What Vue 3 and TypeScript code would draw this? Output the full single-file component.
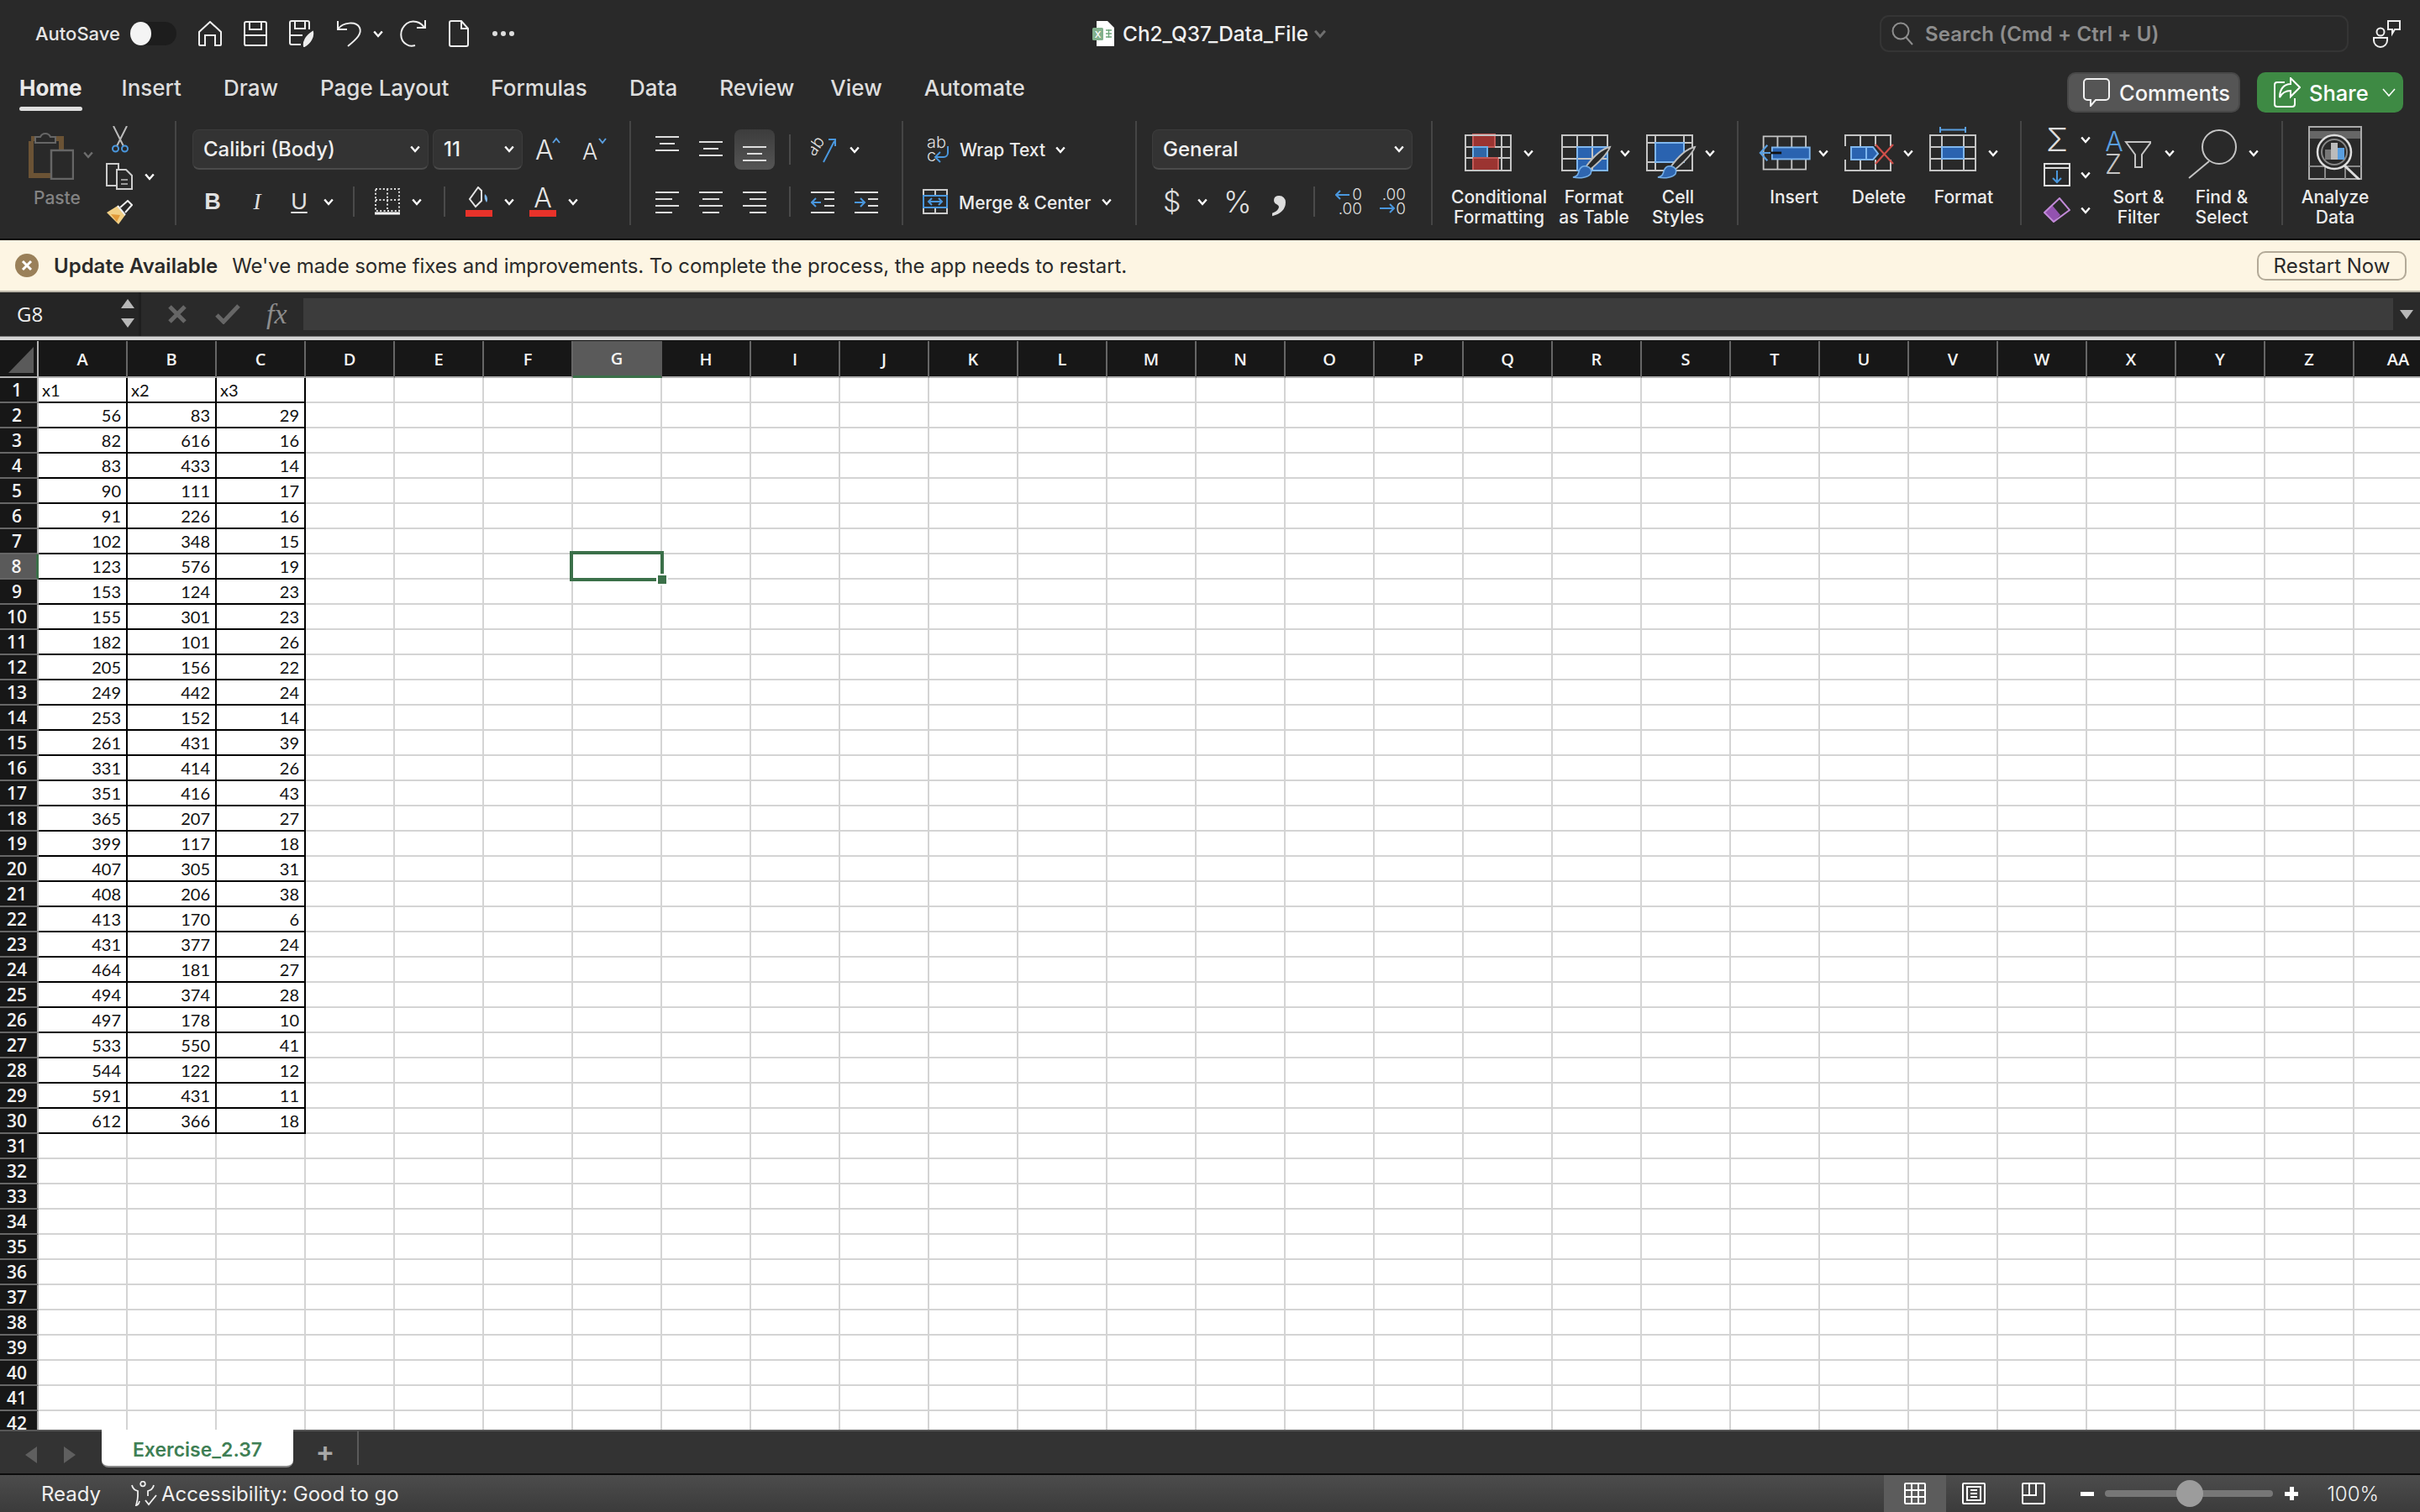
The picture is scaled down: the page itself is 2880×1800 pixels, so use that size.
<script setup lang="ts">
const columns = [..."ABCDEFGHIJKLMNOPQRSTUVWXYZ", "AA"];

const data: (string | number)[][] = [
  ["x1", "x2", "x3"],
  [56, 83, 29], [82, 616, 16], [83, 433, 14], [90, 111, 17], [91, 226, 16],
  [102, 348, 15], [123, 576, 19], [153, 124, 23], [155, 301, 23], [182, 101, 26],
  [205, 156, 22], [249, 442, 24], [253, 152, 14], [261, 431, 39], [331, 414, 26],
  [351, 416, 43], [365, 207, 27], [399, 117, 18], [407, 305, 31], [408, 206, 38],
  [413, 170, 6], [431, 377, 24], [464, 181, 27], [494, 374, 28], [497, 178, 10],
  [533, 550, 41], [544, 122, 12], [591, 431, 11], [612, 366, 18],
];

const rowNumbers = Array.from({ length: 42 }, (_, i) => i + 1);
const selectedCol = 6;
const selectedRow = 8;

function cellValue(row: number, col: number) {
  return data[row - 1]?.[col] ?? "";
}
function isBoxed(row: number, col: number) {
  return col < 3 && row <= data.length;
}
</script>

<template>
  <div class="app">
    <svg class="defs" width="0" height="0">
      <defs>
        <symbol id="chev" viewBox="0 0 12 9">
          <path d="M1.2 1.5 6 7l4.8-5.5" fill="none" stroke="currentColor" stroke-width="2.4" />
        </symbol>
        <symbol id="brush" viewBox="0 0 62 64" overflow="visible">
          <path d="M58 25c-3 8-14 19-25 28l-4-4c8-11 19-22 29-24Z" fill="#292929" stroke="#bdbdbd" stroke-width="2" />
          <path d="M30 48c5 1 7 5 5 9-3 4-12 6-21 4 5-1 6-3 7-7 1-5 5-7 9-6Z" fill="#2f66b0" stroke="#74aee6" stroke-width="1.6" />
        </symbol>
      </defs>
    </svg>

    <header class="titlebar">
      <div class="title-left">
        <span class="autosave">AutoSave</span>
        <span class="toggle"><span class="knob"></span></span>
        <svg class="qa" width="28" height="30" viewBox="0 0 28 30" fill="none" stroke="#eee" stroke-width="2">
          <path d="M1 13 14 1l13 12v15a1 1 0 0 1-1 1h-6V17h-12v12H2a1 1 0 0 1-1-1V13Z" />
        </svg>
        <svg class="qa" width="28" height="30" viewBox="0 0 28 30" fill="none" stroke="#eee" stroke-width="2">
          <path d="M1 3a2 2 0 0 1 2-2h22a2 2 0 0 1 2 2v24a2 2 0 0 1-2 2H3a2 2 0 0 1-2-2V3ZM7 1v9h14V1M1 17h26v12H1" />
        </svg>
        <svg class="qa" width="30" height="32" viewBox="0 0 30 32" fill="none" stroke="#eee" stroke-width="2">
          <path d="M14 29H3a2 2 0 0 1-2-2V3a2 2 0 0 1 2-2h19a2 2 0 0 1 2 2v8M7 1v9h12V1M1 18h15" />
          <path d="M18 31c-1-5 2-12 10-17 1 5-2 13-10 17Z" fill="#eee" />
        </svg>
        <svg width="35" height="32" viewBox="0 0 35 32" fill="none" stroke="#eee" stroke-width="2">
          <path d="M2 1v10h11M2 11C8 2 24 1 28 9c3 7-3 13-14 22" />
        </svg>
        <svg class="chev chev-undo"><use href="#chev" /></svg>
        <svg width="32" height="32" viewBox="0 0 32 32" fill="none" stroke="#eee" stroke-width="2">
          <path d="M29 9C25 2 15-1 8 4-1 11-1 24 8 29c3 2 7 2 10 1M30 0v9H20" />
        </svg>
        <svg class="qa-new" width="24" height="32" viewBox="0 0 24 32" fill="none" stroke="#eee" stroke-width="2">
          <path d="M1 3a2 2 0 0 1 2-2h12l8 9v19a2 2 0 0 1-2 2H3a2 2 0 0 1-2-2V3ZM15 1v9h8" />
        </svg>
        <span class="dots"><i></i><i></i><i></i></span>
      </div>
      <div class="doc-title">
        <svg width="26" height="30" viewBox="0 0 26 30">
          <path d="M5 0h13l8 8v22H5Z" fill="#fff" />
          <rect x="0" y="8" width="13" height="15" rx="1.5" fill="#82b08c" />
          <text x="6.5" y="20" text-anchor="middle" class="file-x">X</text>
          <path d="M16 11h7M16 15h7M16 19h7M19.5 10v10" stroke="#6fa57b" stroke-width="1.4" />
        </svg>
        <span>Ch2_Q37_Data_File</span>
        <svg class="chev chev-dim chev-title" viewBox="0 0 12 9"><use href="#chev" /></svg>
      </div>
      <div class="search">
        <svg width="26" height="28" viewBox="0 0 26 28" fill="none" stroke="#8e8e8e" stroke-width="2">
          <circle cx="11" cy="11" r="9.5" /><path d="m17 18 8 9" />
        </svg>
        <span>Search (Cmd + Ctrl + U)</span>
      </div>
      <svg class="person" width="34" height="34" viewBox="0 0 34 34" fill="none" stroke="#eee" stroke-width="2">
        <circle cx="9" cy="15" r="4.5" />
        <path d="M1 22h16v3a8 8 0 0 1-16 0v-3ZM18 2h14v10h-6l-3 5v-5h-5V2Z" />
      </svg>
    </header>

    <nav class="tabs">
      <div class="tab-list">
        <span class="tab active">Home</span>
        <span class="tab">Insert</span>
        <span class="tab">Draw</span>
        <span class="tab">Page Layout</span>
        <span class="tab">Formulas</span>
        <span class="tab">Data</span>
        <span class="tab">Review</span>
        <span class="tab tab-view">View</span>
        <span class="tab">Automate</span>
      </div>
      <div class="tab-actions">
        <button class="btn comments">
          <svg width="32" height="34" viewBox="0 0 32 34" fill="none" stroke="#f2f2f2" stroke-width="2">
            <path d="M5 1h22a4 4 0 0 1 4 4v17a4 4 0 0 1-4 4H15l-6 7v-7H5a4 4 0 0 1-4-4V5a4 4 0 0 1 4-4Z" />
          </svg>
          Comments
        </button>
        <button class="btn share">
          <svg width="32" height="36" viewBox="0 0 32 36" fill="none" stroke="#fff" stroke-width="2">
            <path d="M13 6H4a3 3 0 0 0-3 3v23a3 3 0 0 0 3 3h18a3 3 0 0 0 3-3v-7" />
            <path d="M20 1v7c-8 0-13 6-13 16 3-6 7-8 13-8v7l11-11L20 1Z" />
          </svg>
          Share
          <svg class="chev chev-share" viewBox="0 0 16 10"><path d="m1 1 7 8 7-8" fill="none" stroke="#fff" stroke-width="1.6" /></svg>
        </button>
      </div>
    </nav>

    <section class="ribbon">
      <!-- clipboard -->
      <div class="group g-clip">
        <div class="paste">
          <div class="paste-top">
            <svg width="54" height="60" viewBox="0 0 54 60" fill="none">
              <path d="M3 14v41h26M31 11h8v14M3 11h6" stroke="#6b5335" stroke-width="6" />
              <path d="M8 16V9h6a6.5 6.5 0 0 1 12 0h6v7Z" fill="#292929" stroke="#666" stroke-width="2" />
              <rect x="27" y="25" width="26" height="34" fill="#292929" stroke="#666" stroke-width="2.5" />
            </svg>
            <svg class="chev chev-dim"><use href="#chev" /></svg>
          </div>
          <span class="paste-label">Paste</span>
        </div>
        <div class="clip-tools">
          <svg class="scissors" width="22" height="32" viewBox="0 0 22 32" fill="none">
            <path d="M3 0l12 24M19 0 7 24" stroke="#bbb" stroke-width="2" />
            <circle cx="5.5" cy="27" r="3.5" stroke="#4a97dd" stroke-width="2" />
            <circle cx="16.5" cy="27" r="3.5" stroke="#4a97dd" stroke-width="2" />
          </svg>
          <div class="tool">
            <svg width="32" height="32" viewBox="0 0 32 32" fill="none" stroke="#ccc" stroke-width="2">
              <path d="M12 27H1V1h14v7M13 8h11l7 7v16H13V8Z" />
              <path d="M18 20h8M18 25h8" stroke="#999" />
            </svg>
            <svg class="chev"><use href="#chev" /></svg>
          </div>
          <svg class="format-painter" width="32" height="30" viewBox="0 0 32 30">
            <path d="M1 15 14 7l9 11-8 11Z" fill="#f2cf85" />
            <path d="M6 17 17 18l-4 8Z" fill="#e29a3a" />
            <path d="M14 7 23 18" stroke="#eee" stroke-width="2" />
            <path d="m17 9 9-8 5 5-8 9" fill="none" stroke="#eee" stroke-width="2" />
          </svg>
        </div>
      </div>

      <!-- font -->
      <div class="group g-font">
        <div class="rib-row font-r1">
          <div class="select select-font"><span>Calibri (Body)</span><svg class="chev"><use href="#chev" /></svg></div>
          <div class="select select-size"><span>11</span><svg class="chev"><use href="#chev" /></svg></div>
          <svg class="grow" width="32" height="30" viewBox="0 0 32 30">
            <text x="0" y="27" class="a-glyph">A</text>
            <path d="m21 7 4-5 4 5" fill="none" stroke="#5a9fe0" stroke-width="2" />
          </svg>
          <svg class="shrink" width="32" height="30" viewBox="0 0 32 30">
            <text x="0" y="27" class="a-glyph small">A</text>
            <path d="m20 2 4 5 4-5" fill="none" stroke="#5a9fe0" stroke-width="2" />
          </svg>
        </div>
        <div class="rib-row font-r2">
          <span class="glyph bold">B</span>
          <span class="glyph italic">I</span>
          <span class="tool tool-u">
            <span class="glyph under">U</span>
            <svg class="chev"><use href="#chev" /></svg>
          </span>
          <i class="vsep"></i>
          <span class="tool tool-border">
            <svg width="30" height="32" viewBox="0 0 30 32" fill="none" stroke="#ddd" stroke-width="2" stroke-dasharray="2 2.4">
              <path d="M1 1h28v26H1ZM15 1v26M1 14h28" />
              <path d="M0 30h30" stroke-dasharray="none" stroke="#fff" stroke-width="3" />
            </svg>
            <svg class="chev"><use href="#chev" /></svg>
          </span>
          <i class="vsep"></i>
          <span class="tool tool-fill">
            <svg width="32" height="36" viewBox="0 0 32 36">
              <path d="M15 1 5 15l7 9 7-7V5Z" fill="none" stroke="#e5e5e5" stroke-width="2" />
              <path d="M23 9c3 2 4 7 2 10-2-3-3-6-2-10Z" fill="#7fb6e8" />
              <rect y="28" width="32" height="8" fill="#e8322a" />
            </svg>
            <svg class="chev"><use href="#chev" /></svg>
          </span>
          <span class="tool">
            <svg width="32" height="36" viewBox="0 0 32 36">
              <text x="16" y="25" text-anchor="middle" class="a-glyph">A</text>
              <rect y="28" width="32" height="8" fill="#e8322a" />
            </svg>
            <svg class="chev"><use href="#chev" /></svg>
          </span>
        </div>
      </div>

      <!-- alignment -->
      <div class="group g-align">
        <div class="rib-row align-r1">
          <svg width="28" height="32" viewBox="0 0 28 32" stroke="#ddd" stroke-width="2"><path d="M0 1h28M5 9h18M0 17h28" /></svg>
          <svg width="28" height="32" viewBox="0 0 28 32" stroke="#ddd" stroke-width="2"><path d="M0 7h28M5 15h18M0 23h28" /></svg>
          <span class="align-active">
            <svg width="28" height="32" viewBox="0 0 28 32" stroke="#ddd" stroke-width="2"><path d="M0 13h28M5 21h18M0 29h28" /></svg>
          </span>
          <i class="vsep"></i>
          <span class="tool">
            <svg width="32" height="32" viewBox="0 0 32 32" fill="none">
              <text x="0" y="0" transform="translate(4 25) rotate(-55)" class="thin-text">ab</text>
              <path d="M15 31 28 6M21 4h8v8" stroke="#4a97dd" stroke-width="2" />
            </svg>
            <svg class="chev"><use href="#chev" /></svg>
          </span>
        </div>
        <div class="rib-row align-r2">
          <svg width="28" height="32" viewBox="0 0 28 32" stroke="#ddd" stroke-width="2"><path d="M0 5h28M0 13h20M0 21h28M0 29h20" /></svg>
          <svg width="28" height="32" viewBox="0 0 28 32" stroke="#ddd" stroke-width="2"><path d="M0 5h28M4 13h20M0 21h28M4 29h20" /></svg>
          <svg width="28" height="32" viewBox="0 0 28 32" stroke="#ddd" stroke-width="2"><path d="M0 5h28M8 13h20M0 21h28M8 29h20" /></svg>
          <i class="vsep"></i>
          <svg width="28" height="32" viewBox="0 0 28 32" fill="none" stroke="#ddd" stroke-width="2">
            <path d="M0 5h28M16 13h12M16 21h12M0 29h28" />
            <path d="M12 17H1M6 12l-5 5 5 5" stroke="#4a97dd" />
          </svg>
          <svg width="28" height="32" viewBox="0 0 28 32" fill="none" stroke="#ddd" stroke-width="2">
            <path d="M0 5h28M16 13h12M16 21h12M0 29h28" />
            <path d="M0 17h11M7 12l5 5-5 5" stroke="#4a97dd" />
          </svg>
        </div>
      </div>

      <!-- wrap and merge -->
      <div class="group g-wrap">
        <div class="rib-row wrap-r1">
          <svg width="27" height="32" viewBox="0 0 27 32" fill="none">
            <text x="0" y="14" class="thin-text">ab</text>
            <text x="0" y="30" class="thin-text">c</text>
            <path d="M25 12v8a5 5 0 0 1-5 5h-9M16 19l-6 6 6 6" stroke="#4a97dd" stroke-width="2" />
          </svg>
          <span class="rib-text">Wrap Text</span>
          <svg class="chev"><use href="#chev" /></svg>
        </div>
        <div class="rib-row wrap-r2">
          <svg width="30" height="30" viewBox="0 0 30 30" fill="none" stroke="#ccc" stroke-width="2">
            <path d="M1 1h28v28H1ZM1 8h28M1 22h28M15 1v7M15 22v7" />
            <rect x="1" y="8" width="28" height="14" stroke="#4a97dd" />
            <path d="M7 15h16M11 11l-4 4 4 4M19 11l4 4-4 4" stroke="#4a97dd" />
          </svg>
          <span class="rib-text">Merge &amp; Center</span>
          <svg class="chev"><use href="#chev" /></svg>
        </div>
      </div>

      <!-- number -->
      <div class="group g-number">
        <div class="rib-row number-r1">
          <div class="select select-general"><span>General</span><svg class="chev"><use href="#chev" /></svg></div>
        </div>
        <div class="rib-row number-r2">
          <span class="tool tool-dollar">
            <span class="sym dollar">$</span>
            <svg class="chev"><use href="#chev" /></svg>
          </span>
          <span class="sym percent">%</span>
          <span class="comma">,</span>
          <i class="vsep"></i>
          <svg class="dec" width="32" height="32" viewBox="0 0 32 32" fill="none">
            <text x="32" y="14" text-anchor="end" class="dec-text">0</text>
            <text x="32" y="31" text-anchor="end" class="dec-text">.00</text>
            <path d="M17 8H1M6 3 1 8l5 5" stroke="#4a97dd" stroke-width="2" />
          </svg>
          <svg class="dec" width="32" height="32" viewBox="0 0 32 32" fill="none">
            <text x="32" y="14" text-anchor="end" class="dec-text">.00</text>
            <text x="32" y="31" text-anchor="end" class="dec-text">0</text>
            <path d="M1 24h17M13 19l5 5-5 5" stroke="#4a97dd" stroke-width="2" />
          </svg>
        </div>
      </div>

      <!-- styles -->
      <div class="group g-styles">
        <div class="big b-cf">
          <div class="big-top">
            <svg width="56" height="64" viewBox="0 0 56 64" fill="none">
              <rect x="10" y="10" width="26" height="15" fill="#9b3431" stroke="#c25a56" stroke-width="2" />
              <rect x="10" y="25" width="17" height="13" fill="#2f66a6" stroke="#6eaee6" stroke-width="2" />
              <rect x="10" y="38" width="30" height="15" fill="#9b3431" stroke="#c25a56" stroke-width="2" />
              <path d="M1 11h54v42H1ZM44 11v42M36 25h19M40 38h15M1 25h9M1 38h9" stroke="#c4c4c4" stroke-width="2" />
            </svg>
            <svg class="chev"><use href="#chev" /></svg>
          </div>
          <span class="big-label">Conditional<br />Formatting</span>
        </div>
        <div class="big b-ft">
          <div class="big-top">
            <svg width="56" height="64" viewBox="0 0 56 64" fill="none" overflow="visible">
              <rect x="19" y="25" width="36" height="28" fill="#2a63b0" stroke="#7fb6ee" stroke-width="2" />
              <path d="M1 11h54v42H1ZM19 11v42M37 11v42M1 25h54M1 39h54" stroke="#c4c4c4" stroke-width="2" />
              <rect x="19" y="25" width="36" height="28" stroke="#7fb6ee" stroke-width="2" />
              <use href="#brush" width="62" height="64" />
            </svg>
            <svg class="chev"><use href="#chev" /></svg>
          </div>
          <span class="big-label">Format<br />as Table</span>
        </div>
        <div class="big b-cs">
          <div class="big-top">
            <svg width="56" height="64" viewBox="0 0 56 64" fill="none" overflow="visible">
              <path d="M1 11h54v42H1ZM11 11v42M45 11v15M1 20h54M1 43h34" stroke="#c4c4c4" stroke-width="2" />
              <rect x="11" y="20" width="34" height="23" fill="#2a63b0" stroke="#7fb6ee" stroke-width="2" />
              <use href="#brush" width="62" height="64" />
            </svg>
            <svg class="chev"><use href="#chev" /></svg>
          </div>
          <span class="big-label">Cell<br />Styles</span>
        </div>
      </div>

      <!-- cells -->
      <div class="group g-cells">
        <div class="big">
          <div class="big-top">
            <svg width="56" height="64" viewBox="0 0 60 64" fill="none" overflow="visible">
              <path d="M5 11h54v42H5ZM23 11v42M41 11v42" stroke="#c4c4c4" stroke-width="2" />
              <rect x="16" y="25" width="48" height="15" fill="#2a63b0" stroke="#7fb6ee" stroke-width="2" />
              <path d="M1 32h26M10 22 1 32l9 10" stroke="#5a9fe0" stroke-width="2.4" />
              <path d="M14 32h14" stroke="#111" stroke-width="3" />
            </svg>
            <svg class="chev"><use href="#chev" /></svg>
          </div>
          <span class="big-label">Insert</span>
        </div>
        <div class="big">
          <div class="big-top">
            <svg width="56" height="64" viewBox="0 0 56 64" fill="none" overflow="visible">
              <path d="M1 24V11h54v13M1 40v13h54V40M19 11v13M37 11v13M19 40v13M37 40v13" stroke="#c4c4c4" stroke-width="2" />
              <path d="M8 25h26l6 8-6 7H8Z" fill="#2a63b0" stroke="#7fb6ee" stroke-width="2" />
              <path d="M26 25v15" stroke="#7fb6ee" stroke-width="2" />
              <path d="M37 22 58 45M58 22 37 45" stroke="#d0504a" stroke-width="2.2" />
            </svg>
            <svg class="chev"><use href="#chev" /></svg>
          </div>
          <span class="big-label">Delete</span>
        </div>
        <div class="big">
          <div class="big-top">
            <svg width="56" height="64" viewBox="0 0 56 64" fill="none">
              <path d="M13 1v7M43 1v7M13 4.500h30" stroke="#5a9fe0" stroke-width="2" />
              <path d="M1 11h54v42H1ZM15 11v42M41 11v42M1 25h54M1 39h54" stroke="#c4c4c4" stroke-width="2" />
              <rect x="15" y="25" width="26" height="14" fill="#2a63b0" stroke="#7fb6ee" stroke-width="2" />
            </svg>
            <svg class="chev"><use href="#chev" /></svg>
          </div>
          <span class="big-label">Format</span>
        </div>
      </div>

      <!-- editing -->
      <div class="group g-edit">
        <div class="edit-col">
          <span class="tool edit-item">
            <span class="sigma">Σ</span>
            <svg class="chev"><use href="#chev" /></svg>
          </span>
          <span class="tool edit-item">
            <svg width="32" height="28" viewBox="0 0 32 28" fill="none" stroke="#ddd" stroke-width="2">
              <path d="M1 1h30v26H1ZM1 6h30" />
              <path d="M16 9v14M11 18l5 5 5-5" stroke="#4a97dd" />
            </svg>
            <svg class="chev"><use href="#chev" /></svg>
          </span>
          <span class="tool edit-item">
            <svg width="32" height="30" viewBox="0 0 32 30" fill="none">
              <path d="M1 18 10 9l10 12-8 8Z" fill="#9352b0" />
              <path d="M1 18 19 1l12 14-19 14Z" stroke="#c28ad8" stroke-width="2" />
            </svg>
            <svg class="chev"><use href="#chev" /></svg>
          </span>
        </div>
        <div class="big b-sort">
          <div class="big-top">
            <svg width="54" height="64" viewBox="0 0 54 64" fill="none">
              <text x="10" y="30" text-anchor="middle" class="az-a">A</text>
              <text x="9" y="57" text-anchor="middle" class="az-z">Z</text>
              <path d="M24 19h30L43 34v15h-8V34Z" stroke="#c4c4c4" stroke-width="2" />
            </svg>
            <svg class="chev"><use href="#chev" /></svg>
          </div>
          <span class="big-label">Sort &amp;<br />Filter</span>
        </div>
        <div class="big b-find">
          <div class="big-top">
            <svg width="58" height="64" viewBox="0 0 58 64" fill="none" stroke="#c4c4c4" stroke-width="2">
              <ellipse cx="37" cy="25" rx="20" ry="20" />
              <path d="M25 42 1 62" />
            </svg>
            <svg class="chev"><use href="#chev" /></svg>
          </div>
          <span class="big-label">Find &amp;<br />Select</span>
        </div>
      </div>

      <!-- analyze -->
      <div class="group g-analyze">
        <div class="big">
          <div class="big-top">
            <svg width="64" height="64" viewBox="0 0 64 64" fill="none">
              <path d="M1 1h62v62H1Z" stroke="#aaa" stroke-width="2" />
              <rect x="2" y="6" width="60" height="9" fill="#666" />
              <path d="M1 48h62M20 48v15M44 48v15" stroke="#888" stroke-width="2" />
              <circle cx="31" cy="31" r="20" fill="#292929" stroke="#ddd" stroke-width="2.5" />
              <circle cx="31" cy="31" r="15" stroke="#888" stroke-width="2" />
              <rect x="20" y="28" width="8" height="12" fill="#777" />
              <rect x="27" y="20" width="8" height="20" fill="#bbb" />
              <rect x="35" y="26" width="8" height="14" fill="#5a9fe0" />
              <path d="m43 47 18 17" stroke="#ddd" stroke-width="3" />
            </svg>
          </div>
          <span class="big-label">Analyze<br />Data</span>
        </div>
      </div>
    </section>

    <section class="notice">
      <span class="notice-close">
        <svg width="14" height="14" viewBox="0 0 14 14"><path d="m2 2 10 10M12 2 2 12" stroke="#fff" stroke-width="3" /></svg>
      </span>
      <strong>Update Available</strong>
      <span class="notice-msg">We've made some fixes and improvements. To complete the process, the app needs to restart.</span>
      <button class="restart">Restart Now</button>
    </section>

    <section class="formula">
      <div class="namebox">
        <span>G8</span>
        <span class="stepper"><i class="tri up"></i><i class="tri down"></i></span>
      </div>
      <div class="fx-tools">
        <svg width="22" height="22" viewBox="0 0 22 22"><path d="m2 2 18 18M20 2 2 20" stroke="#666" stroke-width="5" /></svg>
        <svg width="30" height="24" viewBox="0 0 30 24" fill="none"><path d="m2 13 8 8L28 2" stroke="#666" stroke-width="5" /></svg>
        <span class="fx">fx</span>
      </div>
      <div class="formula-input"></div>
      <i class="tri down formula-drop"></i>
    </section>
    <div class="sheet-rule"></div>

    <main class="sheet">
      <div class="grid-row head-row">
        <div class="corner"><i></i></div>
        <div
          v-for="(c, i) in columns"
          :key="c"
          class="col-head"
          :class="{ selected: i === selectedCol }"
        >{{ c }}</div>
      </div>
      <div v-for="r in rowNumbers" :key="r" class="grid-row">
        <div class="row-head" :class="{ selected: r === selectedRow }">{{ r }}</div>
        <div
          v-for="(c, i) in columns"
          :key="c"
          class="cell"
          :class="{ boxed: isBoxed(r, i), num: typeof cellValue(r, i) === 'number' }"
        >
          {{ cellValue(r, i) }}
          <span v-if="r === selectedRow && i === selectedCol" class="cursor"><i></i></span>
        </div>
      </div>
    </main>

    <section class="sheetbar">
      <span class="nav-arrow left"></span>
      <span class="nav-arrow right"></span>
      <span class="sheet-tab">Exercise_2.37</span>
      <span class="add-sheet">+</span>
      <i class="sheet-sep"></i>
    </section>

    <footer class="status">
      <span class="ready">Ready</span>
      <svg class="a11y" width="34" height="30" viewBox="0 0 34 30" fill="none" stroke="#eee" stroke-width="1.800">
        <circle cx="14" cy="3.500" r="2.800" />
        <path d="M1 5c1 5 4 6 7 7v6c0 4-1 7-2 11 2 0 3-1 4-5M27 5c-1 5-4 6-7 7v6" />
        <path d="m17 23 4 5 9-11" />
      </svg>
      <span class="a11y-text">Accessibility: Good to go</span>
      <div class="status-right">
        <span class="view-btn active">
          <svg width="26" height="26" viewBox="0 0 26 26" fill="none" stroke="#fff" stroke-width="2">
            <rect x="1" y="1" width="24" height="24" rx="1" /><path d="M9 1v24M17 1v24M1 9h24M1 17h24" />
          </svg>
        </span>
        <span class="view-btn">
          <svg width="28" height="26" viewBox="0 0 28 26" fill="none" stroke="#fff" stroke-width="2">
            <rect x="1" y="1" width="26" height="24" rx="1" /><rect x="6" y="5" width="16" height="16" />
            <path d="M10 9h8M10 13h8M10 17h8" />
          </svg>
        </span>
        <span class="view-btn">
          <svg width="28" height="26" viewBox="0 0 28 26" fill="none" stroke="#fff" stroke-width="2">
            <rect x="1" y="1" width="26" height="24" rx="1" /><path d="M1 15h16V1M9 1v14" />
          </svg>
        </span>
        <i class="zoom-minus"></i>
        <span class="zoom-track"><i class="zoom-thumb"></i></span>
        <span class="zoom-plus"></span>
        <span class="zoom-pct">100%</span>
      </div>
    </footer>
  </div>
</template>

<style>
html,
body {
  margin: 0;
  background: #292929;
  overflow: hidden;
}
</style>

<style scoped>
.app {
  height: 100vh;
  display: flex;
  flex-direction: column;
  background: #292929;
  color: #e8e8e8;
  font-family: Inter, "Noto Sans", sans-serif;
  overflow: hidden;
}

.defs {
  position: absolute;
}

.chev {
  width: 12px;
  height: 9px;
  flex: none;
  color: #fff;
}

.chev-dim {
  color: #6e6e6e;
}

/* title bar */
.titlebar {
  height: 80px;
  flex: none;
  display: flex;
  align-items: center;
}

.title-left {
  width: 1300px;
  padding-left: 42px;
  box-sizing: border-box;
  display: flex;
  align-items: center;
  flex: none;
}

.autosave {
  font-size: 22px;
  font-weight: 500;
  width: 113px;
  color: #e6e6e6;
}

.toggle {
  width: 55px;
  height: 28px;
  border-radius: 14px;
  background: #1d1d1d;
  display: block;
  margin-right: 26px;
}

.knob {
  display: block;
  width: 25px;
  height: 28px;
  border-radius: 50%;
  background: #f4f4f4;
}

.qa {
  margin-right: 26px;
}

.chev-undo {
  margin: 0 20px 0 9px;
}

.qa-new {
  margin-left: 26px;
}

.dots {
  display: flex;
  gap: 4px;
  margin-left: 28px;
}

.dots i {
  width: 6px;
  height: 6px;
  border-radius: 50%;
  background: #ddd;
}

.doc-title {
  width: 937px;
  flex: none;
  display: flex;
  align-items: center;
  gap: 10px;
  font-size: 24.4px;
  font-weight: 500;
  color: #f0f0f0;
}

.chev-title {
  width: 16px;
  height: 11px;
  margin-left: -4px;
}

.file-x {
  font-size: 11px;
  fill: #fff;
  font-family: Inter, sans-serif;
}

.search {
  width: 558px;
  height: 44px;
  flex: none;
  box-sizing: border-box;
  border: 2px solid #353535;
  border-radius: 11px;
  display: flex;
  align-items: center;
  gap: 14px;
  padding-left: 12px;
  font-size: 24px;
  font-weight: 600;
  letter-spacing: 0.1px;
  color: #8d8d8d;
}

.person {
  margin-left: 29px;
}

/* tabs */
.tabs {
  height: 56px;
  flex: none;
  display: flex;
  justify-content: space-between;
  align-items: center;
  padding: 0 20px 0 23px;
}

.tab-list {
  display: flex;
  gap: 50px;
  height: 56px;
}

.tab {
  font-size: 26px;
  font-weight: 500;
  color: #dedede;
  line-height: 50px;
  position: relative;
}

.tab.active {
  font-weight: 700;
  color: #e8e8e8;
  margin-right: -3px;
}

.tab-view {
  margin-left: -7px;
}

.tab.active::after {
  content: "";
  position: absolute;
  left: 0;
  right: 0;
  top: 47px;
  height: 5px;
  border-radius: 3px;
  background: #dedede;
}

.tab-actions {
  display: flex;
  gap: 20px;
  margin-top: 4px;
}

.btn {
  height: 48px;
  box-sizing: border-box;
  border-radius: 10px;
  border: none;
  display: flex;
  align-items: center;
  font-family: inherit;
  font-size: 25.5px;
  font-weight: 500;
  color: #f5f5f5;
  padding: 0;
}

.comments {
  width: 206px;
  background: #555;
  border: 2px solid #484848;
  padding-left: 17px;
  gap: 11px;
}

.share {
  width: 174px;
  background: #3e8a44;
  padding-left: 20px;
  gap: 10px;
  color: #fff;
}

.chev-share {
  width: 16px;
  height: 10px;
  margin-left: 6px;
}

/* ribbon */
.ribbon {
  height: 150px;
  flex: none;
  box-sizing: border-box;
  padding-top: 8px;
  border-bottom: 2px solid #000;
  display: flex;
}

.group {
  height: 124px;
  flex: none;
  box-sizing: border-box;
  border-right: 2px solid #454545;
}

.rib-row {
  height: 48px;
  display: flex;
  align-items: center;
}

.g-font,
.g-align,
.g-wrap,
.g-number {
  padding-top: 10px;
  display: flex;
  flex-direction: column;
  gap: 14px;
}

.tool {
  display: flex;
  align-items: center;
  gap: 14px;
}

.vsep {
  width: 2px;
  height: 36px;
  background: #4a4a4a;
  flex: none;
}

/* clipboard */
.g-clip {
  width: 210px;
  padding-left: 34px;
  display: flex;
}

.paste {
  width: 92px;
  padding-top: 10px;
  flex: none;
}

.paste-top {
  display: flex;
  align-items: center;
  gap: 11px;
}

.paste-label {
  display: block;
  margin: 9px 0 0 6px;
  font-size: 21px;
  font-weight: 500;
  color: #838383;
}

.clip-tools {
  padding-top: 6px;
  display: flex;
  flex-direction: column;
  align-items: flex-start;
  gap: 12px;
}

.scissors {
  margin-left: 6px;
}

/* font */
.g-font {
  width: 541px;
}

.select {
  height: 48px;
  box-sizing: border-box;
  background: #333;
  border: 1px solid #3c3c3c;
  border-bottom: 2px solid #4b4b4b;
  border-radius: 8px;
  display: flex;
  align-items: center;
  justify-content: space-between;
  padding: 0 9px 0 12px;
  font-size: 24px;
  font-weight: 500;
  color: #efefef;
  flex: none;
}

.font-r1 {
  padding-left: 19px;
}

.select-font {
  width: 281px;
}

.select-size {
  width: 107px;
  margin-left: 5px;
}

.grow {
  margin-left: 15px;
}

.shrink {
  margin-left: 24px;
}

.a-glyph {
  font-family: Inter, sans-serif;
  font-size: 32px;
  font-weight: 300;
  fill: #e6e6e6;
}

.a-glyph.small {
  font-size: 27px;
}

.font-r2 {
  padding-left: 33px;
}

.glyph {
  width: 20px;
  text-align: center;
  font-size: 27px;
  color: #e0e0e0;
  font-family: "Liberation Sans", sans-serif;
}

.bold {
  font-weight: 700;
  margin-right: 33px;
}

.italic {
  font-style: italic;
  font-family: "Liberation Serif", serif;
  margin-right: 30px;
}

.under {
  text-decoration: underline;
  text-underline-offset: 3px;
}

.tool-u {
  gap: 19px;
  margin-right: 23px;
}

.font-r2 .vsep {
  margin-right: 24px;
}

.tool-border {
  margin-right: 26px;
}

.tool-fill {
  margin-right: 18px;
}

/* align */
.g-align {
  width: 324px;
}

.align-r1 {
  padding-left: 29px;
  gap: 24px;
}

.align-active {
  width: 48px;
  height: 48px;
  margin-left: -10px;
  margin-right: -7px;
  border-radius: 8px;
  background: linear-gradient(#3c3c3c, #555);
  display: flex;
  align-items: center;
  justify-content: center;
  flex: none;
}

.align-r2 {
  padding-left: 29px;
  gap: 24px;
}

.align-r2 .vsep {
  margin-left: 3px;
}

.thin-text {
  font-family: Inter, sans-serif;
  font-size: 20px;
  font-weight: 300;
  fill: #ddd;
}

/* wrap */
.g-wrap {
  width: 278px;
}

.rib-text {
  font-size: 21px;
  font-weight: 500;
  color: #ececec;
  white-space: nowrap;
}

.wrap-r1 {
  padding-left: 28px;
  gap: 12px;
}

.wrap-r2 {
  padding-left: 23px;
  gap: 13px;
}

.wrap-r2 .rib-text {
  margin-top: 3px;
}

/* number */
.g-number {
  width: 352px;
}

.number-r1 {
  padding-left: 18px;
}

.select-general {
  width: 310px;
}

.number-r2 {
  padding-left: 31px;
}

.sym {
  font-weight: 300;
  color: #e0e0e0;
  line-height: 1;
}

.tool-dollar {
  gap: 21px;
}

.dollar {
  width: 20px;
  font-size: 34px;
}

.percent {
  width: 32px;
  font-size: 36px;
  margin-left: 19px;
}

.comma {
  width: 20px;
  margin-left: 25px;
  font-family: "Liberation Serif", serif;
  font-weight: 700;
  font-size: 80px;
  line-height: 48px;
  color: #ddd;
  transform: translateY(-22px);
}

.number-r2 .vsep {
  margin: 0 24px 0 30px;
}

.dec + .dec {
  margin-left: 20px;
}

.dec-text {
  font-family: Inter, sans-serif;
  font-size: 19px;
  font-weight: 300;
  fill: #ddd;
}

/* large buttons */
.big {
  width: 82px;
  flex: none;
  display: flex;
  flex-direction: column;
  align-items: center;
  padding-top: 6px;
}

.big-top {
  height: 64px;
  display: flex;
  align-items: center;
  gap: 14px;
}

.big-label {
  margin-top: 9px;
  font-size: 21px;
  line-height: 24px;
  font-weight: 500;
  text-align: center;
  white-space: nowrap;
  color: #ececec;
}

.g-styles {
  width: 364px;
  padding-left: 38px;
  display: flex;
}

.b-ft {
  margin-left: 33px;
}

.b-ft .big-label {
  transform: translateX(-2px);
}

.b-cs {
  margin-left: 19px;
}

.b-cs .big-label {
  transform: translateX(-3px);
}

.g-cells {
  width: 337px;
  padding-left: 25px;
  display: flex;
  gap: 19px;
}

.g-edit {
  width: 311px;
  padding-left: 26px;
  display: flex;
}

.edit-col {
  width: 56px;
  flex: none;
  padding-top: 8px;
  display: flex;
  flex-direction: column;
  gap: 14px;
}

.edit-item {
  height: 28px;
  gap: 11px;
  justify-content: space-between;
}

.sigma {
  width: 32px;
  font-size: 38px;
  line-height: 28px;
  font-weight: 300;
  text-align: center;
  color: #ddd;
}

.b-sort {
  margin-left: 18px;
}

.b-sort .big-top {
  gap: 16px;
}

.b-sort .big-label,
.b-find .big-label {
  transform: translateX(-2px);
}

.b-find {
  width: 84px;
  margin-left: 16px;
}

.az-a {
  font-family: Inter, sans-serif;
  font-size: 32px;
  font-weight: 300;
  fill: #5a9fe0;
}

.az-z {
  font-family: Inter, sans-serif;
  font-size: 32px;
  font-weight: 300;
  fill: #c4c4c4;
}

.g-analyze {
  width: 163px;
  border-right: none;
  padding-left: 21px;
}

/* update notice */
.notice {
  height: 62px;
  flex: none;
  box-sizing: border-box;
  background: #fdf5e3;
  border-bottom: 2px solid #bdb8ab;
  color: #2a2a2a;
  display: flex;
  align-items: center;
  padding: 0 16px 0 18px;
  font-size: 24px;
}

.notice-close {
  width: 28px;
  height: 28px;
  border-radius: 50%;
  background: #9a8059;
  display: flex;
  align-items: center;
  justify-content: center;
}

.notice strong {
  font-weight: 600;
  margin: 0 17px 0 18px;
}

.notice-msg {
  letter-spacing: -0.08px;
}

.restart {
  margin-left: auto;
  width: 178px;
  height: 35px;
  box-sizing: border-box;
  border: 2px solid #b3aa98;
  border-radius: 10px;
  background: transparent;
  font-family: inherit;
  font-size: 24px;
  color: #2a2a2a;
  padding: 0;
}

/* formula bar */
.formula {
  height: 52px;
  flex: none;
  background: #2a2a2a;
  display: flex;
  align-items: center;
}

.namebox {
  width: 168px;
  height: 52px;
  flex: none;
  box-sizing: border-box;
  background: #252525;
  border-right: 3px solid #1f1f1f;
  display: flex;
  align-items: center;
  justify-content: space-between;
  padding: 0 5px 2px 20px;
  font-size: 24px;
  font-family: "Open Sans", sans-serif;
  color: #eee;
}

.stepper {
  display: flex;
  flex-direction: column;
  gap: 12px;
}

.tri {
  display: block;
  width: 0;
  height: 0;
  border-left: 8px solid transparent;
  border-right: 8px solid transparent;
}

.tri.up {
  border-bottom: 11px solid #b8b8b8;
}

.tri.down {
  border-top: 11px solid #b8b8b8;
}

.fx-tools {
  width: 193px;
  flex: none;
  box-sizing: border-box;
  display: flex;
  align-items: center;
  padding-left: 32px;
  gap: 34px;
}

.fx {
  margin-left: -3px;
  font-family: "Liberation Serif", serif;
  font-style: italic;
  font-size: 34px;
  color: #8d8d8d;
}

.formula-input {
  flex: 1;
  height: 38px;
  background: #3c3c3c;
}

.formula-drop {
  margin: 0 8px 0 8px;
}

.sheet-rule {
  height: 6px;
  flex: none;
  box-sizing: border-box;
  background: #d4d4d4;
  border-top: 1px solid #777;
  border-bottom: 1px solid #111;
}

/* sheet */
.sheet {
  flex: 1;
  min-height: 0;
  overflow: hidden;
  background: #fff;
}

.grid-row {
  display: grid;
  grid-template-columns: 46px repeat(27, 106px);
  height: 30px;
}

.head-row {
  height: 44px;
}

.corner {
  background: #171717;
  box-sizing: border-box;
  border-right: 2px solid #b3b3b3;
  border-bottom: 2px solid #b3b3b3;
  padding: 7px 4px 2px 10px;
}

.corner i {
  display: block;
  width: 30px;
  height: 31px;
  background: #5a5a5a;
  clip-path: polygon(100% 0, 100% 100%, 0 100%);
}

.col-head {
  background: #171717;
  box-sizing: border-box;
  border-right: 2px solid #666;
  border-bottom: 2px solid #b3b3b3;
  color: #f4f4f4;
  font-family: "Open Sans", sans-serif;
  font-weight: 600;
  font-size: 20px;
  display: flex;
  align-items: center;
  justify-content: center;
}

.col-head.selected {
  background: #5a5a5a;
  border-right-color: #5a5a5a;
  border-bottom: 3px solid #3b7049;
}

.row-head {
  background: #171717;
  box-sizing: border-box;
  border-right: 2px solid #b3b3b3;
  border-bottom: 2px solid #666;
  color: #f4f4f4;
  font-family: "Open Sans", sans-serif;
  font-weight: 600;
  font-size: 21px;
  padding-right: 4px;
  display: flex;
  align-items: center;
  justify-content: center;
}

.row-head.selected {
  background: #5a5a5a;
  border-right: 3px solid #3b7049;
}

.cell {
  position: relative;
  box-sizing: border-box;
  border-right: 2px solid #d4d4d4;
  border-bottom: 2px solid #d4d4d4;
  padding: 0 6px 0 4px;
  color: #111;
  font-family: Lato, "Open Sans", sans-serif;
  font-size: 20px;
  line-height: 28px;
  white-space: nowrap;
}

.cell.boxed {
  border-color: #000;
}

.cell.num {
  text-align: right;
}

.cursor {
  position: absolute;
  left: -4px;
  right: -4px;
  top: -4px;
  bottom: -4px;
  border: 4px solid #3b7049;
  z-index: 2;
}

.cursor i {
  position: absolute;
  right: -7px;
  bottom: -7px;
  width: 10px;
  height: 10px;
  background: #3b7049;
  outline: 2px solid #fff;
}

/* sheet tabs */
.sheetbar {
  height: 52px;
  flex: none;
  box-sizing: border-box;
  background: #333;
  border-top: 2px solid #565656;
  display: flex;
  align-items: flex-start;
  position: relative;
}

.nav-arrow {
  width: 0;
  height: 0;
  margin-top: 18px;
  border-top: 10px solid transparent;
  border-bottom: 10px solid transparent;
}

.nav-arrow.left {
  margin-left: 30px;
  border-right: 14px solid #5f5f5f;
}

.nav-arrow.right {
  margin-left: 32px;
  border-left: 14px solid #5f5f5f;
}

.sheet-tab {
  width: 228px;
  height: 45px;
  margin: -2px 0 0 31px;
  padding-top: 5px;
  box-sizing: border-box;
  background: #fff;
  border-radius: 0 0 8px 8px;
  border-bottom: 2px solid #888;
  color: #3f7f55;
  font-weight: 600;
  font-size: 23px;
  display: flex;
  align-items: center;
  justify-content: center;
}

.add-sheet {
  width: 76px;
  text-align: center;
  font-size: 34px;
  line-height: 48px;
  font-weight: 600;
  color: #a8a8a8;
}

.sheet-sep {
  width: 2px;
  height: 40px;
  background: #5a5a5a;
}

/* status bar */
.status {
  height: 46px;
  flex: none;
  box-sizing: border-box;
  border-top: 2px solid #0c0c0c;
  background: linear-gradient(#4c4c4c, #3b3b3b);
  display: flex;
  align-items: center;
  padding-left: 49px;
  font-size: 24px;
  color: #f0f0f0;
}

.ready {
  width: 107px;
}

.a11y {
  margin-right: 2px;
}

.status-right {
  margin-left: auto;
  height: 100%;
  display: flex;
  align-items: center;
  padding-right: 49px;
}

.view-btn {
  width: 74px;
  height: 100%;
  display: flex;
  align-items: center;
  justify-content: center;
}

.view-btn.active {
  background: #5c5c5c;
  margin-right: -3px;
}

.view-btn + .view-btn {
  width: 71px;
}

.zoom-minus {
  width: 16px;
  height: 5px;
  background: #fff;
  margin-left: 21px;
}

.zoom-track {
  width: 200px;
  height: 8px;
  margin-left: 13px;
  border-radius: 4px;
  background: #777;
  position: relative;
}

.zoom-thumb {
  position: absolute;
  left: 85px;
  top: -12px;
  width: 32px;
  height: 32px;
  border-radius: 50%;
  background: #9c9c9c;
}

.zoom-plus {
  width: 16px;
  height: 16px;
  margin-left: 14px;
  background:
    linear-gradient(#fff, #fff) center / 16px 5px no-repeat,
    linear-gradient(#fff, #fff) center / 5px 16px no-repeat;
}

.zoom-pct {
  margin-left: 34px;
  font-size: 24px;
  font-weight: 300;
}
</style>
